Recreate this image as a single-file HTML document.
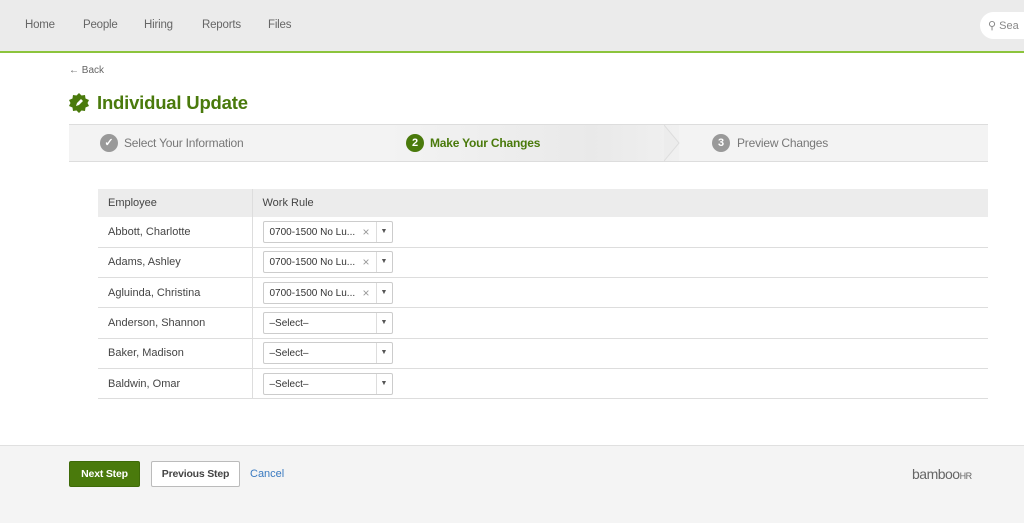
<!DOCTYPE html>
<html><head><style>
*{box-sizing:border-box;margin:0;padding:0}
body{width:1024px;height:523px;overflow:hidden;background:#fff;font-family:"Liberation Sans",sans-serif;position:relative;color:#444}
.hdr{position:absolute;left:0;top:0;width:1024px;height:53px;background:#ebebeb;border-bottom:2px solid #8cc43c}
.nav{position:absolute;top:19px;font-size:11.5px;color:#666;letter-spacing:-0.2px}
.search{position:absolute;left:980px;top:12px;width:60px;height:27px;background:#fff;border-radius:14px;font-size:11px;color:#888;padding:7px 0 0 8px}
.abs{position:absolute}
.steps{position:absolute;left:69px;top:124px;width:919px;height:38px;background:#f3f3f3;border-top:1px solid #ddd;border-bottom:1px solid #ddd}
.circ{position:absolute;width:18px;height:18px;border-radius:50%;color:#fff;font-size:11px;font-weight:bold;text-align:center;line-height:18px}
.stxt{position:absolute;font-size:12px;top:11px;letter-spacing:-0.2px}
table{position:absolute;left:98px;top:189px;width:890px;border-collapse:collapse;font-size:11px}
th{background:#ececec;height:28px;text-align:left;font-weight:normal;color:#444;padding-left:10px}
td{height:30.3px;border-bottom:1px solid #ddd;padding-left:10px;color:#444}
td:first-child,th:first-child{width:154px;border-right:1px solid #ddd}
.sel{position:relative;width:130px;height:22px;border:1px solid #ccc;border-radius:2px;font-size:10px;padding:5px 0 0 6px;color:#333}
.sel .x{position:absolute;right:22px;top:3px;color:#999;font-size:12px}
.sel .ar{position:absolute;right:0;top:0;width:16px;height:20px;border-left:1px solid #ddd;font-size:7px;color:#555;text-align:center;padding-top:6px}
.foot{position:absolute;left:0;top:445px;width:1024px;height:78px;background:#f4f4f4;border-top:1px solid #e0e0e0}
.btn{position:absolute;top:461px;height:26px;font-size:10.5px;font-weight:bold;text-align:center;line-height:25px;border-radius:2px;letter-spacing:-0.2px}
</style></head><body>
<div class="hdr">
<span class="nav" style="left:25px">Home</span>
<span class="nav" style="left:83px">People</span>
<span class="nav" style="left:144px">Hiring</span>
<span class="nav" style="left:202px">Reports</span>
<span class="nav" style="left:268px">Files</span>
<div class="search">⚲ Sea</div>
</div>
<div class="abs" style="left:69px;top:65px;font-size:10px;color:#666">← Back</div>
<svg class="abs" style="left:69px;top:93px" width="20" height="20" viewBox="0 0 20 20"><polygon fill="#4a7a0c" points="10,0 12.5,2.5 16,2 16.5,5.5 20,7 18.5,10 20,13 16.5,14.5 16,18 12.5,17.5 10,20 7.5,17.5 4,18 3.5,14.5 0,13 1.5,10 0,7 3.5,5.5 4,2 7.5,2.5"/><path d="M7 13l1-3 4-4 2 2-4 4z" fill="#fff"/></svg>
<div class="abs" style="left:97px;top:92px;font-size:18.5px;color:#4a7a0c;font-weight:bold;letter-spacing:-0.2px">Individual Update</div>
<div class="steps">
<div class="abs" style="left:320px;top:0;width:290px;height:36px;background:linear-gradient(90deg,#f3f3f3,#e9e9e9 70%,#f0f0f0)"></div>
<svg class="abs" style="left:595px;top:0" width="20" height="36"><path d="M0 0L15 18 0 36" fill="#ececec" stroke="#ddd"/></svg>
<div class="circ" style="left:31px;top:9px;background:#999">✓</div>
<span class="stxt" style="left:55px;color:#777">Select Your Information</span>
<div class="circ" style="left:337px;top:9px;background:#4a7a0c">2</div>
<span class="stxt" style="left:361px;color:#4a7a0c;font-weight:bold">Make Your Changes</span>
<div class="circ" style="left:643px;top:9px;background:#999">3</div>
<span class="stxt" style="left:668px;color:#777">Preview Changes</span>
</div>
<table>
<tr><th>Employee</th><th>Work Rule</th></tr>
<tr><td>Abbott, Charlotte</td><td><div class="sel">0700-1500 No Lu...<span class="x">×</span><span class="ar">▼</span></div></td></tr>
<tr><td>Adams, Ashley</td><td><div class="sel">0700-1500 No Lu...<span class="x">×</span><span class="ar">▼</span></div></td></tr>
<tr><td>Agluinda, Christina</td><td><div class="sel">0700-1500 No Lu...<span class="x">×</span><span class="ar">▼</span></div></td></tr>
<tr><td>Anderson, Shannon</td><td><div class="sel">–Select–<span class="ar">▼</span></div></td></tr>
<tr><td>Baker, Madison</td><td><div class="sel">–Select–<span class="ar">▼</span></div></td></tr>
<tr><td>Baldwin, Omar</td><td><div class="sel">–Select–<span class="ar">▼</span></div></td></tr>
</table>
<div class="foot"></div>
<div class="btn" style="left:69px;width:71px;background:#4a7a0c;color:#fff;border:1px solid #3e6a08">Next Step</div>
<div class="btn" style="left:151px;width:89px;background:#fff;color:#444;border:1px solid #bbb">Previous Step</div>
<div class="abs" style="left:250px;top:468px;font-size:11px;color:#3a7ac0">Cancel</div>
<div class="abs" style="left:912px;top:466px;font-size:14px;color:#666;letter-spacing:-0.5px">bamboo<span style="font-size:9px">HR</span></div>
</body></html>
